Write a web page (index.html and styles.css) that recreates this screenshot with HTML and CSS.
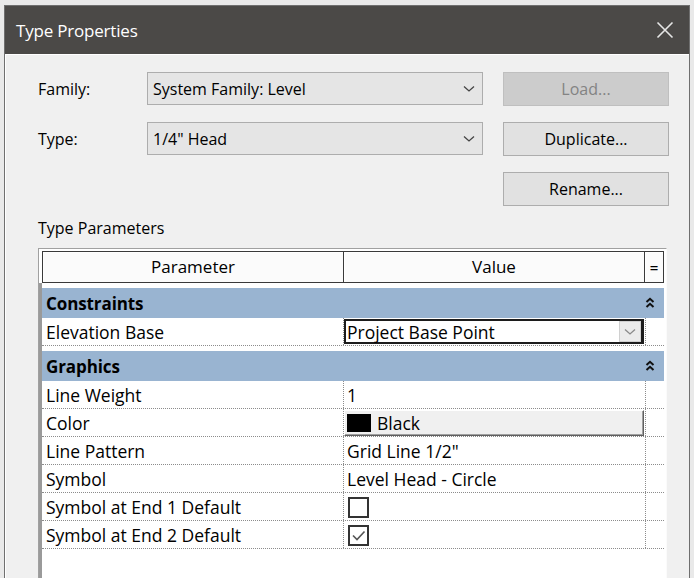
FILE: index.html
```html
<!DOCTYPE html>
<html>
<head>
<meta charset="utf-8">
<title>Type Properties</title>
<link rel="stylesheet" href="styles.css">
</head>
<body>
<div class="dialog">
  <div class="titlebar">
    <span class="title">Type Properties</span>
    <svg class="close" width="18" height="18" viewBox="0 0 18 18"><path d="M1.5 1.5L16.5 16.5M16.5 1.5L1.5 16.5" stroke="#e6e6e6" stroke-width="1.6" fill="none"/></svg>
  </div>
  <div class="content">
    <div class="form">
      <span class="lbl">Family:</span>
      <div class="select"><span>System Family: Level</span><svg class="chev" width="12" height="8" viewBox="0 0 12 8"><path d="M1 1.5L6 6L11 1.5" stroke="#444" stroke-width="1.3" fill="none"/></svg></div>
      <div class="btn disabled">Load...</div>
      <span class="lbl">Type:</span>
      <div class="select"><span>1/4" Head</span><svg class="chev" width="12" height="8" viewBox="0 0 12 8"><path d="M1 1.5L6 6L11 1.5" stroke="#444" stroke-width="1.3" fill="none"/></svg></div>
      <div class="btn">Duplicate...</div>
      <span></span>
      <span></span>
      <div class="btn">Rename...</div>
    </div>
    <div class="section-label">Type Parameters</div>
    <div class="table">
      <div class="thead">
        <div class="th th-first">Parameter</div>
        <div class="th">Value</div>
        <div class="th th-eq">=</div>
      </div>
      <div class="tbody">
        <div class="group">
          <span>Constraints</span>
          <svg class="collapse" width="10" height="12" viewBox="0 0 10 12"><path d="M1.5 5L5 1.8L8.5 5M1.5 10L5 6.8L8.5 10" stroke="#111" stroke-width="2" fill="none"/></svg>
        </div>
        <div class="row">
          <div class="cell pname">Elevation Base</div>
          <div class="cell val">
            <div class="combo"><span>Project Base Point</span><div class="combo-btn"><svg width="12" height="8" viewBox="0 0 12 8"><path d="M1 1.5L6 6L11 1.5" stroke="#8a8a8a" stroke-width="1.3" fill="none"/></svg></div></div>
          </div>
          <div class="cell ext"></div>
        </div>
        <div class="group">
          <span>Graphics</span>
          <svg class="collapse" width="10" height="12" viewBox="0 0 10 12"><path d="M1.5 5L5 1.8L8.5 5M1.5 10L5 6.8L8.5 10" stroke="#111" stroke-width="2" fill="none"/></svg>
        </div>
        <div class="row">
          <div class="cell pname">Line Weight</div>
          <div class="cell val"><span class="vtext">1</span></div>
          <div class="cell ext"></div>
        </div>
        <div class="row">
          <div class="cell pname">Color</div>
          <div class="cell val">
            <div class="colorbtn"><span class="swatch"></span><span>Black</span></div>
          </div>
          <div class="cell ext"></div>
        </div>
        <div class="row">
          <div class="cell pname">Line Pattern</div>
          <div class="cell val"><span class="vtext">Grid Line 1/2"</span></div>
          <div class="cell ext"></div>
        </div>
        <div class="row">
          <div class="cell pname">Symbol</div>
          <div class="cell val"><span class="vtext">Level Head - Circle</span></div>
          <div class="cell ext"></div>
        </div>
        <div class="row">
          <div class="cell pname">Symbol at End 1 Default</div>
          <div class="cell val"><span class="check"></span></div>
          <div class="cell ext"></div>
        </div>
        <div class="row">
          <div class="cell pname">Symbol at End 2 Default</div>
          <div class="cell val"><span class="check"><svg width="17" height="17" viewBox="0 0 17 17"><path d="M3 8.5L7 12.5L14.5 4.5" stroke="#555" stroke-width="1.6" fill="none"/></svg></span></div>
          <div class="cell ext"></div>
        </div>
      </div>
    </div>
  </div>
</div>
</body>
</html>
```

FILE: styles.css
```css
html, body {
  margin: 0;
  height: 578px;
  overflow: hidden;
}
body {
  background: #e9e9e9;
  font-family: "Open Sans", "Noto Sans", sans-serif;
  color: #000;
}
.dialog {
  margin: 5px 0 0 4px;
  width: 684px;
  height: 572px;
  border: 1px solid #6f6f6f;
  border-bottom: none;
  background: #f0f0f0;
  display: flex;
  flex-direction: column;
}
.titlebar {
  height: 48px;
  background: #4b4947;
  display: flex;
  align-items: center;
  justify-content: space-between;
  padding: 0 15px 0 11px;
  flex-shrink: 0;
}
.title {
  color: #ffffff;
  font-size: 17px;
  letter-spacing: -0.2px;
}
.close { display: block; }
.content {
  flex: 1;
  border-top: 1px solid #ffffff;
  border-left: 1px solid #ffffff;
  padding: 17px 0 0 32px;
  display: flex;
  flex-direction: column;
  min-height: 0;
}
.form {
  display: grid;
  grid-template-columns: 89px 336px 166px;
  grid-auto-rows: 34px;
  column-gap: 20px;
  row-gap: 16px;
  align-items: center;
  font-size: 16px;
}
.lbl { line-height: 20px; }
.select {
  height: 31px;
  background: #e5e5e5;
  border: 1px solid #adadad;
  display: flex;
  align-items: center;
  justify-content: space-between;
  padding: 0 7px 0 5px;
  margin-top: -1px;
}
.chev { display: block; }
.btn {
  height: 32px;
  background: #e1e1e1;
  border: 1px solid #adadad;
  display: flex;
  align-items: center;
  justify-content: center;
}
.btn.disabled {
  background: #cccccc;
  border-color: #bfbfbf;
  color: #838383;
}
.section-label {
  font-size: 16px;
  line-height: 20px;
  margin-top: 12px;
}
.table {
  margin-top: 10px;
  width: 625px;
  flex: 1;
  min-height: 0;
  overflow: hidden;
  display: flex;
  flex-direction: column;
  border-top: 1px solid #a0a0a0;
  border-left: 1px solid #a0a0a0;
  border-right: 1px solid #fbfbfb;
  padding: 2px 2px 0 0;
  background: #ffffff;
  font-size: 17.5px;
}
.thead {
  display: grid;
  grid-template-columns: 302px 301px 19px;
  height: 32px;
  flex-shrink: 0;
  margin-left: 3px;
}
.th {
  background: #fbfbfb;
  border: 1px solid #3a3a3a;
  border-left: none;
  box-shadow: inset 1px 1px #ffffff;
  display: flex;
  align-items: center;
  justify-content: center;
  line-height: 20px;
  font-size: 17px;
}
.th-first { border-left: 1px solid #3a3a3a; }
.th-eq { font-weight: 600; font-size: 15px; }
.tbody {
  flex: 1;
  border-left: 3px solid #9a9a9a;
  background: #ffffff;
}
.group {
  margin-top: 5px;
  height: 30px;
  background: #99b4d1;
  display: flex;
  align-items: center;
  justify-content: space-between;
  padding: 0 9px 0 4px;
  font-weight: 700;
  font-size: 17px;
  letter-spacing: -0.1px;
}
.collapse { display: block; }
.row {
  display: grid;
  grid-template-columns: 301px 302px 19px;
  height: 27px;
  border-bottom: 1px dotted #8c8c8c;
}
.cell {
  display: flex;
  align-items: center;
  line-height: 20px;
}
.pname { padding-left: 4px; }
.val, .ext { border-left: 1px dotted #8c8c8c; }
.vtext { padding-left: 3px; }
.combo {
  align-self: flex-start;
  margin-top: 1px;
  width: 294px;
  height: 21px;
  border: 2px solid #1c1c1c;
  border-right-width: 3px;
  display: flex;
  align-items: center;
  justify-content: space-between;
  padding-left: 1px;
  background: #ffffff;
}
.combo-btn {
  width: 20px;
  height: 19px;
  background: #ebebeb;
  border: 1px solid #d0d0d0;
  display: flex;
  align-items: center;
  justify-content: center;
}
.colorbtn {
  align-self: flex-start;
  margin-top: 1px;
  width: 296px;
  height: 24px;
  background: #f0f0f0;
  border: 1px solid;
  border-color: #ffffff #5f5f5f #5f5f5f #ffffff;
  box-shadow: inset -1px -1px #a0a0a0;
  display: flex;
  align-items: center;
  gap: 6px;
  padding-left: 2px;
}
.swatch {
  width: 24px;
  height: 18px;
  background: #000000;
}
.check {
  margin-left: 4px;
  margin-top: 2px;
  width: 17px;
  height: 17px;
  border: 2px solid #333333;
  display: block;
}
.check svg { display: block; }
```
